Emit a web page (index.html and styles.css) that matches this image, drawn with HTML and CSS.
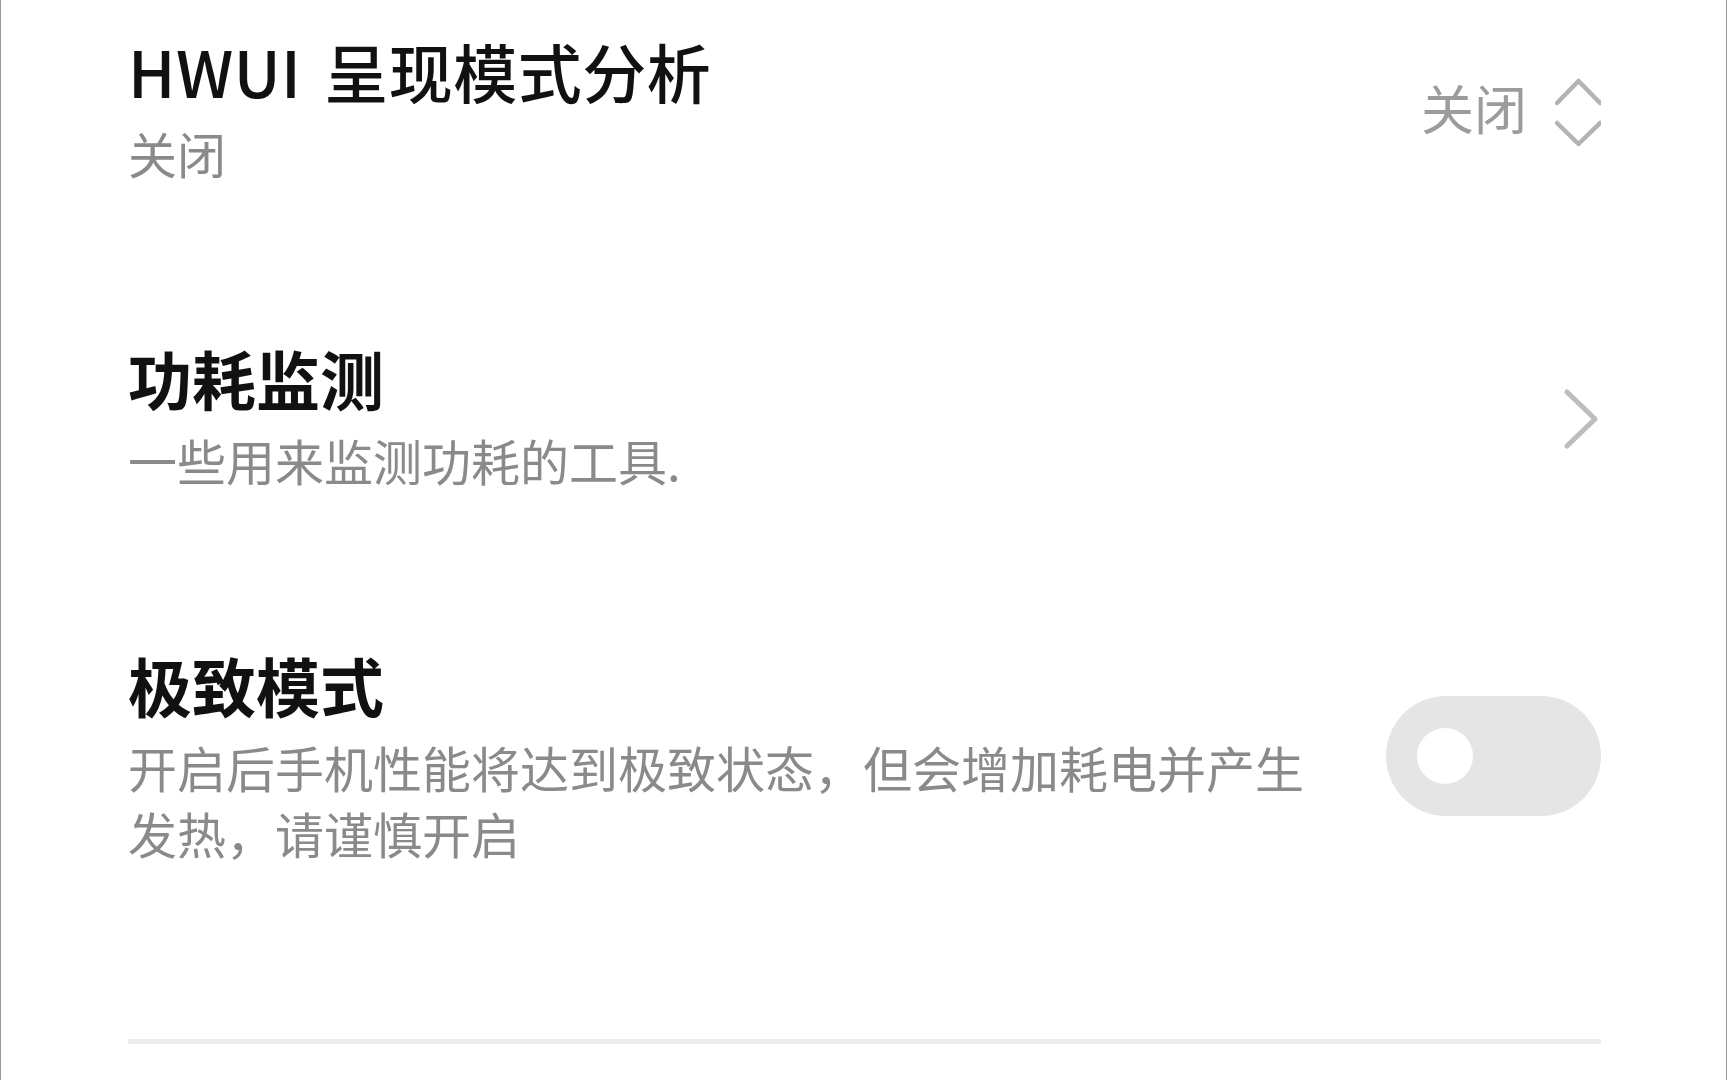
FILE: index.html
```html
<!DOCTYPE html>
<html lang="zh-CN">
<head>
<meta charset="utf-8">
<title>开发者选项</title>
<link rel="stylesheet" href="styles.css">
</head>
<body>
<div class="screen">
  <div class="list">
    <div class="row">
      <div class="row-text">
        <div class="title title-regular">HWUI 呈现模式分析</div>
        <div class="sub">关闭</div>
      </div>
      <div class="control">
        <span class="value">关闭</span>
        <svg class="updown" width="46" height="69" viewBox="0 0 46 69" aria-hidden="true">
          <path d="M2 25 L23.5 3 L45 25" />
          <path d="M2 45 L23.5 66 L45 45" />
        </svg>
      </div>
    </div>
    <div class="row">
      <div class="row-text">
        <div class="title">功耗监测</div>
        <div class="sub">一些用来监测功耗的工具.</div>
      </div>
      <div class="control">
        <svg class="chev" width="36" height="60" viewBox="0 0 36 60" aria-hidden="true">
          <path d="M4 3 L32 30 L4 57" />
        </svg>
      </div>
    </div>
    <div class="row">
      <div class="row-text">
        <div class="title">极致模式</div>
        <div class="sub">开启后手机性能将达到极致状态，但会增加耗电并产生发热，请谨慎开启</div>
      </div>
      <div class="control">
        <div class="toggle"><span class="knob"></span></div>
      </div>
    </div>
  </div>
  <div class="divider"></div>
</div>
</body>
</html>
```

FILE: styles.css
```css
html, body {
  margin: 0;
  padding: 0;
  background: #ffffff;
}

body {
  font-family: "Noto Sans CJK SC", "Noto Sans", sans-serif;
  color: #111111;
}

.screen {
  box-sizing: border-box;
  width: 1727px;
  height: 1080px;
  border-left: 1px solid #9a9a9a;
  border-right: 1px solid #9a9a9a;
  padding: 28px 125px 0 127px;
  overflow: hidden;
}

.list {
  display: flex;
  flex-direction: column;
  gap: 149px;
}

.row {
  display: flex;
  align-items: center;
  justify-content: space-between;
  gap: 60px;
}

.row-text {
  flex: 1;
  min-width: 0;
}

.title {
  font-size: 64px;
  line-height: 84px;
  font-weight: 700;
  color: #111111;
}

.title-regular {
  font-weight: 500;
  word-spacing: 8px;
  letter-spacing: 0.5px;
}

.sub {
  margin-top: 8px;
  font-size: 49px;
  line-height: 66px;
  color: #8a8a8a;
}

.control {
  display: flex;
  align-items: center;
  flex-shrink: 0;
}

.value {
  font-size: 53px;
  line-height: 66px;
  color: #9c9c9c;
  margin-right: 28px;
}

.updown {
  margin-top: 10px;
}

.chev {
  margin-right: 2px;
  margin-top: 10px;
}

.updown path,
.chev path {
  fill: none;
  stroke: #b3b3b3;
  stroke-linecap: round;
  stroke-linejoin: round;
}

.updown path {
  stroke-width: 4.5;
}

.chev path {
  stroke-width: 5;
  stroke: #bdbdbd;
}

.toggle {
  box-sizing: border-box;
  width: 215px;
  height: 120px;
  margin-top: 4px;
  border-radius: 60px;
  background: #e5e5e5;
  display: flex;
  align-items: center;
  padding-left: 31px;
}

.knob {
  width: 56px;
  height: 56px;
  border-radius: 50%;
  background: #ffffff;
}

.divider {
  margin-top: 173px;
  height: 5px;
  background: #ececec;
}
```
